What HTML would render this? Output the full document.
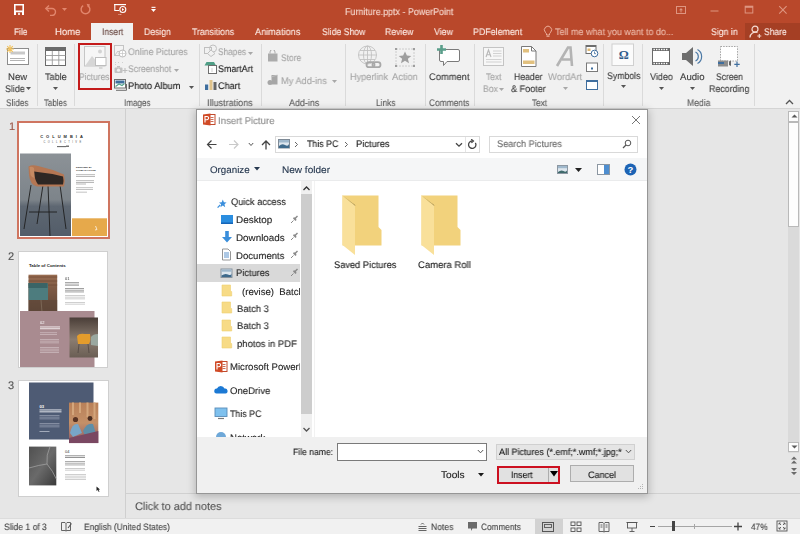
<!DOCTYPE html>
<html><head><meta charset="utf-8"><style>
html,body{margin:0;padding:0;}
body{width:800px;height:534px;position:relative;overflow:hidden;background:#E6E6E6;font-family:"Liberation Sans", sans-serif;}
.t{position:absolute;white-space:nowrap;-webkit-text-stroke:0.12px currentColor;text-rendering:geometricPrecision;will-change:transform;}
</style></head><body>
<div style="position:absolute;left:0px;top:0px;width:800px;height:40px;background:#B9482B"></div>
<div style="position:absolute;left:91px;top:23px;width:42px;height:17px;background:#F1F1F1"></div>
<div style="position:absolute;left:745px;top:23px;width:55px;height:17px;background:#A53F24"></div>
<div class="t" style="left:344.95px;top:8.00px;font-size:9.8px;line-height:9.8px;color:#F6D9CF;transform:scaleX(0.9088);transform-origin:0 0;">Furniture.pptx - PowerPoint</div>
<div class="t" style="left:13.96px;top:28.00px;font-size:9.6px;line-height:9.6px;color:#FBE9E3;transform:scaleX(0.8727);transform-origin:0 0;">File</div>
<div class="t" style="left:55.11px;top:28.00px;font-size:9.6px;line-height:9.6px;color:#FBE9E3;transform:scaleX(0.9880);transform-origin:0 0;">Home</div>
<div class="t" style="left:101.76px;top:28.00px;font-size:9.6px;line-height:9.6px;color:#6B4A44;transform:scaleX(0.8872);transform-origin:0 0;">Insert</div>
<div class="t" style="left:144.05px;top:28.00px;font-size:9.6px;line-height:9.6px;color:#FBE9E3;transform:scaleX(0.9002);transform-origin:0 0;">Design</div>
<div class="t" style="left:192.05px;top:28.00px;font-size:9.6px;line-height:9.6px;color:#FBE9E3;transform:scaleX(0.9046);transform-origin:0 0;">Transitions</div>
<div class="t" style="left:255.02px;top:28.00px;font-size:9.6px;line-height:9.6px;color:#FBE9E3;transform:scaleX(0.9560);transform-origin:0 0;">Animations</div>
<div class="t" style="left:321.55px;top:28.00px;font-size:9.6px;line-height:9.6px;color:#FBE9E3;transform:scaleX(0.9036);transform-origin:0 0;">Slide Show</div>
<div class="t" style="left:385.05px;top:28.00px;font-size:9.6px;line-height:9.6px;color:#FBE9E3;transform:scaleX(0.9023);transform-origin:0 0;">Review</div>
<div class="t" style="left:434.04px;top:28.00px;font-size:9.6px;line-height:9.6px;color:#FBE9E3;transform:scaleX(0.9159);transform-origin:0 0;">View</div>
<div class="t" style="left:473.29px;top:28.00px;font-size:9.6px;line-height:9.6px;color:#FBE9E3;transform:scaleX(0.9212);transform-origin:0 0;">PDFelement</div>
<div class="t" style="left:555.23px;top:28.00px;font-size:9.6px;line-height:9.6px;color:#EBB9A9;transform:scaleX(0.9370);transform-origin:0 0;">Tell me what you want to do...</div>
<div class="t" style="left:711.34px;top:28.00px;font-size:9.6px;line-height:9.6px;color:#FBE9E3;transform:scaleX(0.9130);transform-origin:0 0;">Sign in</div>
<div class="t" style="left:763.56px;top:28.00px;font-size:9.6px;line-height:9.6px;color:#FBE9E3;transform:scaleX(0.8842);transform-origin:0 0;">Share</div>
<div style="position:absolute;left:0px;top:40px;width:800px;height:68px;background:#F1F1F1"></div>
<div style="position:absolute;left:0px;top:108px;width:800px;height:1px;background:#D4D4D4"></div>
<div style="position:absolute;left:37px;top:44px;width:1px;height:62px;background:#DADADA"></div>
<div style="position:absolute;left:74px;top:44px;width:1px;height:62px;background:#DADADA"></div>
<div style="position:absolute;left:199px;top:44px;width:1px;height:62px;background:#DADADA"></div>
<div style="position:absolute;left:261px;top:44px;width:1px;height:62px;background:#DADADA"></div>
<div style="position:absolute;left:345px;top:44px;width:1px;height:62px;background:#DADADA"></div>
<div style="position:absolute;left:425px;top:44px;width:1px;height:62px;background:#DADADA"></div>
<div style="position:absolute;left:474px;top:44px;width:1px;height:62px;background:#DADADA"></div>
<div style="position:absolute;left:603px;top:44px;width:1px;height:62px;background:#DADADA"></div>
<div style="position:absolute;left:642px;top:44px;width:1px;height:62px;background:#DADADA"></div>
<div style="position:absolute;left:754px;top:44px;width:1px;height:62px;background:#DADADA"></div>
<div class="t" style="left:6.37px;top:99.00px;font-size:9.6px;line-height:9.6px;color:#5E5E5E;transform:scaleX(0.8605);transform-origin:0 0;">Slides</div>
<div class="t" style="left:43.59px;top:99.00px;font-size:9.6px;line-height:9.6px;color:#5E5E5E;transform:scaleX(0.8252);transform-origin:0 0;">Tables</div>
<div class="t" style="left:123.58px;top:99.00px;font-size:9.6px;line-height:9.6px;color:#5E5E5E;transform:scaleX(0.8418);transform-origin:0 0;">Images</div>
<div class="t" style="left:207.13px;top:99.00px;font-size:9.6px;line-height:9.6px;color:#5E5E5E;transform:scaleX(0.9412);transform-origin:0 0;">Illustrations</div>
<div class="t" style="left:288.53px;top:99.00px;font-size:9.6px;line-height:9.6px;color:#5E5E5E;transform:scaleX(0.9309);transform-origin:0 0;">Add-ins</div>
<div class="t" style="left:375.56px;top:99.00px;font-size:9.6px;line-height:9.6px;color:#5E5E5E;transform:scaleX(0.8746);transform-origin:0 0;">Links</div>
<div class="t" style="left:428.96px;top:99.00px;font-size:9.6px;line-height:9.6px;color:#5E5E5E;transform:scaleX(0.8726);transform-origin:0 0;">Comments</div>
<div class="t" style="left:531.58px;top:99.00px;font-size:9.6px;line-height:9.6px;color:#5E5E5E;transform:scaleX(0.8463);transform-origin:0 0;">Text</div>
<div class="t" style="left:686.55px;top:99.00px;font-size:9.6px;line-height:9.6px;color:#5E5E5E;transform:scaleX(0.8988);transform-origin:0 0;">Media</div>
<div class="t" style="left:8.30px;top:73.00px;font-size:9.6px;line-height:9.6px;color:#3C3C3C;transform:scaleX(0.9945);transform-origin:0 0;">New</div>
<div class="t" style="left:4.94px;top:85.00px;font-size:9.6px;line-height:9.6px;color:#3C3C3C;transform:scaleX(0.9229);transform-origin:0 0;">Slide</div>
<div class="t" style="left:44.73px;top:73.00px;font-size:9.6px;line-height:9.6px;color:#3C3C3C;transform:scaleX(0.9455);transform-origin:0 0;">Table</div>
<div class="t" style="left:79.16px;top:73.00px;font-size:9.6px;line-height:9.6px;color:#A6A6A6;transform:scaleX(0.8795);transform-origin:0 0;">Pictures</div>
<div class="t" style="left:128.14px;top:48.00px;font-size:9.6px;line-height:9.6px;color:#A6A6A6;transform:scaleX(0.9156);transform-origin:0 0;">Online Pictures</div>
<div class="t" style="left:128.15px;top:65.00px;font-size:9.6px;line-height:9.6px;color:#A6A6A6;transform:scaleX(0.8916);transform-origin:0 0;">Screenshot</div>
<div class="t" style="left:128.12px;top:82.00px;font-size:9.6px;line-height:9.6px;color:#222;transform:scaleX(0.9624);transform-origin:0 0;">Photo Album</div>
<div class="t" style="left:218.17px;top:48.00px;font-size:9.6px;line-height:9.6px;color:#A6A6A6;transform:scaleX(0.8615);transform-origin:0 0;">Shapes</div>
<div class="t" style="left:218.14px;top:65.00px;font-size:9.6px;line-height:9.6px;color:#222;transform:scaleX(0.9255);transform-origin:0 0;">SmartArt</div>
<div class="t" style="left:218.13px;top:82.00px;font-size:9.6px;line-height:9.6px;color:#222;transform:scaleX(0.9499);transform-origin:0 0;">Chart</div>
<div class="t" style="left:281.16px;top:54.00px;font-size:9.6px;line-height:9.6px;color:#A6A6A6;transform:scaleX(0.8804);transform-origin:0 0;">Store</div>
<div class="t" style="left:281.12px;top:77.00px;font-size:9.6px;line-height:9.6px;color:#A6A6A6;transform:scaleX(0.9643);transform-origin:0 0;">My Add-ins</div>
<div class="t" style="left:350.12px;top:73.00px;font-size:9.6px;line-height:9.6px;color:#A6A6A6;transform:scaleX(0.9510);transform-origin:0 0;">Hyperlink</div>
<div class="t" style="left:392.32px;top:73.00px;font-size:9.6px;line-height:9.6px;color:#A6A6A6;transform:scaleX(0.9688);transform-origin:0 0;">Action</div>
<div class="t" style="left:428.91px;top:73.00px;font-size:9.6px;line-height:9.6px;color:#3C3C3C;transform:scaleX(0.9733);transform-origin:0 0;">Comment</div>
<div class="t" style="left:485.57px;top:73.00px;font-size:9.6px;line-height:9.6px;color:#A6A6A6;transform:scaleX(0.8690);transform-origin:0 0;">Text</div>
<div class="t" style="left:483.05px;top:85.00px;font-size:9.6px;line-height:9.6px;color:#A6A6A6;transform:scaleX(0.9007);transform-origin:0 0;">Box</div>
<div class="t" style="left:514.15px;top:73.00px;font-size:9.6px;line-height:9.6px;color:#3C3C3C;transform:scaleX(0.9052);transform-origin:0 0;">Header</div>
<div class="t" style="left:510.53px;top:85.00px;font-size:9.6px;line-height:9.6px;color:#3C3C3C;transform:scaleX(0.9480);transform-origin:0 0;">&amp; Footer</div>
<div class="t" style="left:548.26px;top:73.00px;font-size:9.6px;line-height:9.6px;color:#A6A6A6;transform:scaleX(0.9749);transform-origin:0 0;">WordArt</div>
<div class="t" style="left:606.54px;top:72.00px;font-size:9.6px;line-height:9.6px;color:#3C3C3C;transform:scaleX(0.9101);transform-origin:0 0;">Symbols</div>
<div class="t" style="left:649.53px;top:73.00px;font-size:9.6px;line-height:9.6px;color:#3C3C3C;transform:scaleX(0.9393);transform-origin:0 0;">Video</div>
<div class="t" style="left:679.90px;top:73.00px;font-size:9.6px;line-height:9.6px;color:#3C3C3C;transform:scaleX(0.9978);transform-origin:0 0;">Audio</div>
<div class="t" style="left:715.96px;top:73.00px;font-size:9.6px;line-height:9.6px;color:#3C3C3C;transform:scaleX(0.8844);transform-origin:0 0;">Screen</div>
<div class="t" style="left:709.14px;top:85.00px;font-size:9.6px;line-height:9.6px;color:#3C3C3C;transform:scaleX(0.9210);transform-origin:0 0;">Recording</div>
<div style="position:absolute;left:77.5px;top:42.5px;width:34.5px;height:47.5px;border:2px solid #C41A1A;box-sizing:border-box"></div>
<div style="position:absolute;left:0px;top:109px;width:800px;height:409px;background:#E6E6E6"></div>
<div style="position:absolute;left:125px;top:109px;width:1px;height:409px;background:#CFCFCF"></div>
<div style="position:absolute;left:126px;top:493px;width:674px;height:1px;background:#D0D0D0"></div>
<div class="t" style="left:134.71px;top:502.00px;font-size:11.2px;line-height:11.2px;color:#555;transform:scaleX(0.9739);transform-origin:0 0;">Click to add notes</div>
<div style="position:absolute;left:0px;top:518px;width:800px;height:16px;background:#F1F1F1"></div>
<div style="position:absolute;left:0px;top:518px;width:800px;height:1px;background:#DCDCDC"></div>
<div class="t" style="left:3.73px;top:523.00px;font-size:9.2px;line-height:9.2px;color:#444;transform:scaleX(0.9320);transform-origin:0 0;">Slide 1 of 3</div>
<div class="t" style="left:84.24px;top:523.00px;font-size:9.2px;line-height:9.2px;color:#444;transform:scaleX(0.9135);transform-origin:0 0;">English (United States)</div>
<div class="t" style="left:430.53px;top:523.00px;font-size:9.2px;line-height:9.2px;color:#444;transform:scaleX(0.9320);transform-origin:0 0;">Notes</div>
<div class="t" style="left:480.55px;top:523.00px;font-size:9.2px;line-height:9.2px;color:#444;transform:scaleX(0.8971);transform-origin:0 0;">Comments</div>
<div style="position:absolute;left:535px;top:519px;width:28px;height:15px;background:#D2D2D2"></div>
<div class="t" style="left:750.55px;top:523.00px;font-size:9.2px;line-height:9.2px;color:#444;transform:scaleX(0.9042);transform-origin:0 0;">47%</div>
<div style="position:absolute;left:788px;top:110.5px;width:11px;height:342px;background:#DADADA"></div>
<div style="position:absolute;left:788px;top:110.5px;width:11px;height:11.5px;background:#FDFDFD;border:1px solid #B9B9B9;box-sizing:border-box"></div>
<svg style="position:absolute;left:790px;top:112px;" width="9" height="8" viewBox="0 0 9 8"><path d="M1.5 5.5 L4.5 2.5 L7.5 5.5Z" fill="#5A5A5A"/></svg>
<div style="position:absolute;left:788px;top:122px;width:11px;height:105px;background:#FDFDFD;border:1px solid #B9B9B9;box-sizing:border-box"></div>
<div style="position:absolute;left:788px;top:442px;width:11px;height:10px;background:#FDFDFD;border:1px solid #B9B9B9;box-sizing:border-box"></div>
<svg style="position:absolute;left:790px;top:443px;" width="9" height="8" viewBox="0 0 9 8"><path d="M1.5 2.5 L4.5 5.5 L7.5 2.5Z" fill="#5A5A5A"/></svg>
<svg style="position:absolute;left:789px;top:455px;" width="10" height="9" viewBox="0 0 10 9"><path d="M2 4.5 L5 1.5 L8 4.5Z M2 8.5 L5 5.5 L8 8.5Z" fill="#6A6A6A"/></svg>
<svg style="position:absolute;left:789px;top:467px;" width="10" height="9" viewBox="0 0 10 9"><path d="M2 1 L5 4 L8 1Z M2 5 L5 8 L8 5Z" fill="#6A6A6A"/></svg>
<svg style="position:absolute;left:60px;top:521px;" width="13" height="11" viewBox="0 0 13 11"><path d="M1.5 1.5 H5 L6 2.5 L7 1.5 H10.5 V9.5 H7 L6 10 L5 9.5 H1.5Z M6 2.5 V10" fill="none" stroke="#555" stroke-width="0.9"/><path d="M8 7 L11.5 2.5" stroke="#555" stroke-width="1.1"/></svg>
<svg style="position:absolute;left:418px;top:522px;" width="9" height="9" viewBox="0 0 9 9"><path d="M3 2.5 L4.5 1 L6 2.5" fill="none" stroke="#555" stroke-width="0.9"/><path d="M0.5 4.5 H8.5 M0.5 6.5 H8.5 M0.5 8.5 H8.5" stroke="#555" stroke-width="0.9"/></svg>
<svg style="position:absolute;left:467px;top:521px;" width="11" height="11" viewBox="0 0 11 11"><path d="M1 1 H10 V7.5 H5.5 L4 10 V7.5 H1Z" fill="#6A6A6A"/></svg>
<svg style="position:absolute;left:541px;top:521px;" width="14" height="12" viewBox="0 0 14 12"><rect x="1.5" y="1.5" width="11" height="9" fill="none" stroke="#555" stroke-width="1"/><rect x="3.5" y="3.5" width="7" height="3" fill="none" stroke="#555" stroke-width="0.9"/></svg>
<svg style="position:absolute;left:570px;top:521px;" width="12" height="12" viewBox="0 0 12 12"><g fill="none" stroke="#555" stroke-width="0.9"><rect x="1" y="1" width="4" height="3.5"/><rect x="7" y="1" width="4" height="3.5"/><rect x="1" y="7" width="4" height="3.5"/><rect x="7" y="7" width="4" height="3.5"/></g></svg>
<svg style="position:absolute;left:598px;top:521px;" width="12" height="12" viewBox="0 0 12 12"><path d="M1 1.5 H5 L6 2.5 L7 1.5 H11 V10.5 H7 L6 11 L5 10.5 H1Z M6 2.5 V11 M2.5 4H4.5 M2.5 6H4.5 M7.5 4H9.5 M7.5 6H9.5" fill="none" stroke="#555" stroke-width="0.9"/></svg>
<svg style="position:absolute;left:626px;top:521px;" width="12" height="12" viewBox="0 0 12 12"><path d="M0.5 1.5 H11.5" stroke="#555" stroke-width="1"/><rect x="1.5" y="1.5" width="9" height="5.5" fill="none" stroke="#555" stroke-width="0.9"/><path d="M6 7 V10.5 M3.5 10.5 H8.5" stroke="#555" stroke-width="0.9"/></svg>
<div style="position:absolute;left:650px;top:526px;width:5px;height:1px;background:#444"></div>
<div style="position:absolute;left:658px;top:526px;width:74px;height:1px;background:#A6A6A6"></div>
<div style="position:absolute;left:694px;top:524px;width:1px;height:5px;background:#A6A6A6"></div>
<div style="position:absolute;left:672px;top:521px;width:3px;height:10px;background:#444"></div>
<svg style="position:absolute;left:733.5px;top:521.5px;" width="8" height="9" viewBox="0 0 8 9"><path d="M4 0.5 V8.5 M0 4.5 H8" stroke="#444" stroke-width="1.3"/></svg>
<svg style="position:absolute;left:776px;top:520px;" width="12" height="12" viewBox="0 0 12 12"><rect x="1" y="1" width="10" height="10" fill="none" stroke="#555" stroke-width="0.9"/><path d="M3 3 L5 5 M9 3 L7 5 M3 9 L5 7 M9 9 L7 7" stroke="#555" stroke-width="0.9"/><path d="M3 3H4.6 M3 3V4.6 M9 3H7.4 M9 3V4.6 M3 9H4.6 M3 9V7.4 M9 9H7.4 M9 9V7.4" stroke="#555" stroke-width="0.9"/></svg>
<div class="t" style="left:8.80px;top:122.00px;font-size:11px;line-height:11px;color:#9A5444;">1</div>
<div class="t" style="left:8.20px;top:252.00px;font-size:11px;line-height:11px;color:#555;">2</div>
<div class="t" style="left:8.20px;top:381.00px;font-size:11px;line-height:11px;color:#555;">3</div>
<div style="position:absolute;left:17px;top:121px;width:93px;height:118px;border:2px solid #CF7560;box-sizing:border-box;background:#fff"></div>
<svg style="position:absolute;left:19px;top:123px;" width="88" height="114" viewBox="0 0 88 114"><rect x="0" y="0" width="88" height="114" fill="#fff"/><text x="44" y="14.8" text-anchor="middle" font-family="Liberation Sans" font-size="4" font-weight="bold" letter-spacing="3" fill="#2A2A2A">COLUMBIA</text><text x="44.5" y="20.3" text-anchor="middle" font-family="Liberation Sans" font-size="2.6" letter-spacing="2.4" fill="#555">COLLECTIVE</text><rect x="38" y="23.3" width="9" height="0.8" fill="#333"/><rect x="47" y="22.6" width="3" height="1.2" fill="#555"/><defs><linearGradient id="g1" x1="0" y1="0" x2="0" y2="1"><stop offset="0" stop-color="#8C9297"/><stop offset="0.56" stop-color="#7D848A"/><stop offset="0.64" stop-color="#5E6772"/><stop offset="1" stop-color="#535D69"/></linearGradient></defs><rect x="1" y="30.5" width="51" height="82.5" fill="url(#g1)"/><g stroke="#1E1E1E" stroke-width="0.9" fill="none"><path d="M12 62 L5 106 M24 62 L18 101 M29 62 L31 113 M41 62 L47 106 M10 89 L38 89"/></g><path d="M9.5 43.5 Q13 41.5 19 43 Q33 46 45 51.5 Q46.5 58 45 63.5 L18 63.5 Q11 62 10 52Z" fill="#B47653"/><path d="M15 48.5 Q30 50 44 53.5 Q45 58 44 61.5 L19 61.5 Q15.5 57 15 48.5Z" fill="#2E2724"/><path d="M10.5 44 Q13 43 15 45 L15.5 55 Q13 55 11.5 52Z" fill="#C58A63"/><text x="57" y="44.6" font-family="Liberation Sans" font-size="2.3" font-weight="bold" fill="#1A1A1A">DESIGNED BY</text><text x="57" y="48" font-family="Liberation Sans" font-size="2.3" font-weight="bold" fill="#1A1A1A">THOMAS LYKTUN</text><rect x="57" y="51.50" width="19" height="0.6" fill="#8A8A8A"/><rect x="57" y="53.10" width="19" height="0.6" fill="#8A8A8A"/><rect x="57" y="57.50" width="18" height="0.6" fill="#8A8A8A"/><rect x="57" y="59.10" width="18" height="0.6" fill="#8A8A8A"/><rect x="57" y="60.70" width="10" height="0.6" fill="#8A8A8A"/><rect x="57" y="64.50" width="17" height="0.6" fill="#999"/><rect x="57" y="66.10" width="17" height="0.6" fill="#999"/><rect x="57" y="68.8" width="11" height="0.6" fill="#999"/><rect x="53" y="95.3" width="35" height="17.7" fill="#E6A94B"/><path d="M76.5 103 L78 106.5 L76 107" stroke="#fff" stroke-width="0.7" fill="none"/></svg>
<div style="position:absolute;left:18px;top:250.5px;width:90px;height:117px;border:1px solid #CFCFCF;box-sizing:border-box;background:#fff"></div>
<svg style="position:absolute;left:19px;top:251.5px;" width="88" height="115" viewBox="0 0 88 115"><rect x="0" y="0" width="88" height="115" fill="#fff"/><text x="10" y="14.6" font-family="Liberation Sans" font-size="4.4" font-weight="bold" fill="#222">Table of Contents</text><defs><linearGradient id="g2" x1="0" y1="0" x2="0" y2="1"><stop offset="0" stop-color="#9A6E52"/><stop offset="0.35" stop-color="#7E5A45"/><stop offset="1" stop-color="#5E4535"/></linearGradient><linearGradient id="g3" x1="0" y1="0" x2="0" y2="1"><stop offset="0" stop-color="#4A3E38"/><stop offset="0.55" stop-color="#8A7C70"/><stop offset="1" stop-color="#6A5E54"/></linearGradient></defs><rect x="9.5" y="22.7" width="28.7" height="38" fill="url(#g2)"/><path d="M9.5 25 H38.2 M9.5 29 H38.2 M9.5 33 H38.2" stroke="#6E4A36" stroke-width="0.8"/><path d="M9.5 31 H27 Q29 31 29 33 V48 H9.5Z" fill="#4D7C7E"/><rect x="9.5" y="31" width="19" height="5" fill="#3A6466"/><path d="M22 48 L23 60" stroke="#B8A890" stroke-width="0.8"/><rect x="9.5" y="48" width="28.7" height="12.7" fill="#5E483A" opacity="0.6"/><text x="46" y="28" font-family="Liberation Sans" font-size="4" fill="#333">01</text><rect x="46" y="30.50" width="14" height="0.7" fill="#555"/><rect x="46" y="32.70" width="14" height="0.7" fill="#555"/><rect x="46" y="36.00" width="19" height="0.7" fill="#777"/><rect x="46" y="37.80" width="19" height="0.7" fill="#777"/><rect x="46" y="39.60" width="19" height="0.7" fill="#777"/><rect x="46" y="43.00" width="20" height="0.6" fill="#B0B0B0"/><rect x="46" y="44.80" width="20" height="0.6" fill="#B0B0B0"/><rect x="46" y="46.60" width="20" height="0.6" fill="#B0B0B0"/><rect x="46" y="50.00" width="20" height="0.6" fill="#B0B0B0"/><rect x="46" y="51.80" width="20" height="0.6" fill="#B0B0B0"/><rect x="1" y="59" width="74.5" height="56" fill="#A98B90"/><rect x="50.5" y="65.5" width="28.5" height="40" fill="url(#g3)"/><path d="M58 84 Q60 81 66 82 L71 82 Q72 89 70 92 L59 92Z" fill="#E39C2C"/><path d="M60 92 L59 101 M69 92 L70 101" stroke="#3A3030" stroke-width="0.5"/><path d="M72 85 Q74 82 79 82 V94 L72 93Z" fill="#9AA8A0"/><text x="21" y="72" font-family="Liberation Sans" font-size="4" fill="#fff">02</text><rect x="21" y="74.50" width="20" height="0.9" fill="#F6F0F1"/><rect x="21" y="76.30" width="20" height="0.9" fill="#F6F0F1"/><rect x="21" y="80.50" width="17" height="0.6" fill="#D8C8CB"/><rect x="21" y="82.30" width="17" height="0.6" fill="#D8C8CB"/><rect x="21" y="87.00" width="19" height="0.6" fill="#D8C8CB"/><rect x="21" y="88.80" width="19" height="0.6" fill="#D8C8CB"/><rect x="21" y="90.60" width="19" height="0.6" fill="#D8C8CB"/><rect x="21" y="95.00" width="19" height="0.6" fill="#D8C8CB"/><rect x="21" y="96.80" width="19" height="0.6" fill="#D8C8CB"/><rect x="21" y="98.60" width="19" height="0.6" fill="#D8C8CB"/><rect x="21" y="100.40" width="19" height="0.6" fill="#D8C8CB"/></svg>
<div style="position:absolute;left:18px;top:379.5px;width:91px;height:117px;border:1px solid #CFCFCF;box-sizing:border-box;background:#fff"></div>
<svg style="position:absolute;left:19px;top:380.5px;" width="89" height="115" viewBox="0 0 89 115"><rect x="0" y="0" width="89" height="115" fill="#fff"/><rect x="10" y="1.5" width="64.5" height="57" fill="#4E5B74"/><text x="20.5" y="26.5" font-family="Liberation Sans" font-size="4.2" font-weight="bold" fill="#fff">03</text><rect x="20.5" y="28.50" width="22" height="0.9" fill="#F0F2F6"/><rect x="20.5" y="30.40" width="22" height="0.9" fill="#F0F2F6"/><rect x="20.5" y="34.00" width="20" height="0.6" fill="#A8B0C0"/><rect x="20.5" y="35.80" width="20" height="0.6" fill="#A8B0C0"/><rect x="20.5" y="37.60" width="20" height="0.6" fill="#A8B0C0"/><rect x="20.5" y="42.00" width="20" height="0.6" fill="#A8B0C0"/><rect x="20.5" y="43.80" width="20" height="0.6" fill="#A8B0C0"/><rect x="20.5" y="45.60" width="20" height="0.6" fill="#A8B0C0"/><rect x="20.5" y="50" width="10" height="0.7" fill="#C8CDD8"/><defs><linearGradient id="g4" x1="0" y1="0" x2="0" y2="1"><stop offset="0" stop-color="#B98058"/><stop offset="0.5" stop-color="#C49068"/><stop offset="1" stop-color="#8A5A6A"/></linearGradient><linearGradient id="g5" x1="0" y1="0" x2="1" y2="1"><stop offset="0" stop-color="#505050"/><stop offset="0.5" stop-color="#6A6A6A"/><stop offset="1" stop-color="#3A3A3A"/></linearGradient></defs><rect x="50" y="21.6" width="29.3" height="40.5" fill="url(#g4)"/><path d="M54 21.6 V34 M61 21.6 V32 M68.5 21.6 V36 M75.5 21.6 V38" stroke="#D4A67C" stroke-width="2"/><path d="M51 52 Q53 42 59 43 L63 52 L54 56Z" fill="#78A6C8"/><circle cx="56.5" cy="38.5" r="2.6" fill="#5A3424"/><path d="M64 50 Q68 41 74 43 L77 53 L66 55Z" fill="#5E8EA8"/><circle cx="71" cy="37.5" r="2.4" fill="#4A2E22"/><path d="M50 57 L79.3 50 V62.1 H50Z" fill="#7A4862"/><rect x="10" y="65.6" width="27.3" height="38.8" fill="url(#g5)"/><path d="M10 87 Q20 84 28 83 Q34 90 37.3 98 M28 83 Q27 74 31 65.6" stroke="#A8A8A8" stroke-width="0.7" fill="none"/><text x="46" y="72" font-family="Liberation Sans" font-size="4" fill="#333">04</text><rect x="46" y="74.50" width="20" height="0.7" fill="#666"/><rect x="46" y="76.30" width="20" height="0.7" fill="#666"/><rect x="46" y="80.00" width="20" height="0.7" fill="#888"/><rect x="46" y="81.80" width="20" height="0.7" fill="#888"/><rect x="46" y="83.60" width="20" height="0.7" fill="#888"/><rect x="46" y="87.00" width="20" height="0.6" fill="#AAA"/><rect x="46" y="88.80" width="20" height="0.6" fill="#AAA"/><rect x="46" y="93.00" width="21" height="0.6" fill="#B0B0B0"/><rect x="46" y="94.80" width="21" height="0.6" fill="#B0B0B0"/><rect x="46" y="96.60" width="21" height="0.6" fill="#B0B0B0"/><rect x="46" y="98.40" width="21" height="0.6" fill="#B0B0B0"/><path d="M77.5 105.5 V110 L78.7 109 L79.8 111 L80.5 110.6 L79.5 108.7 L81 108.5Z" fill="#222"/></svg>
<div style="position:absolute;left:196px;top:109px;width:452px;height:385px;background:#FFFFFF;border:1px solid #969696;box-sizing:border-box;box-shadow:0 2px 8px 1px rgba(0,0,0,0.22)"></div>
<svg style="position:absolute;left:202px;top:113px;" width="14" height="14" viewBox="0 0 14 14"><rect x="6" y="1.5" width="7" height="10" fill="#fff" stroke="#C24A2C" stroke-width="1"/><path d="M8.5 4.5H11.5 M8.5 6.5H11.5 M8.5 8.5H11.5" stroke="#C24A2C" stroke-width="0.8"/><path d="M1 1.5 L8.5 0.5 V12.5 L1 11.5Z" fill="#D04A26"/><path d="M3 9.5 V3.5 H5 A1.6 1.6 0 0 1 5 6.7 H3" fill="none" stroke="#fff" stroke-width="1.1"/></svg>
<div class="t" style="left:218.11px;top:117.00px;font-size:9.8px;line-height:9.8px;color:#8E8E8E;transform:scaleX(0.9795);transform-origin:0 0;">Insert Picture</div>
<svg style="position:absolute;left:631px;top:115px;" width="10" height="10" viewBox="0 0 10 10"><path d="M1 1 L9 9 M9 1 L1 9" stroke="#666" stroke-width="0.9"/></svg>
<svg style="position:absolute;left:206px;top:139px;" width="12" height="11" viewBox="0 0 12 11"><path d="M10.5 5.5 H1.5 M5.5 1.5 L1.5 5.5 L5.5 9.5" fill="none" stroke="#444" stroke-width="1.2"/></svg>
<svg style="position:absolute;left:228px;top:139px;" width="12" height="11" viewBox="0 0 12 11"><path d="M1 5.5 H10 M6 1.5 L10 5.5 L6 9.5" fill="none" stroke="#C9C9C9" stroke-width="1.2"/></svg>
<svg style="position:absolute;left:248px;top:142px;" width="6" height="5" viewBox="0 0 6 5"><path d="M0.8 1 L3 3.5 L5.2 1" fill="none" stroke="#555" stroke-width="1"/></svg>
<svg style="position:absolute;left:261px;top:140px;" width="10" height="10" viewBox="0 0 10 10"><path d="M5 9.5 V1.2 M1 5 L5 1 L9 5" fill="none" stroke="#444" stroke-width="1.3"/></svg>
<div style="position:absolute;left:275px;top:136px;width:205px;height:17px;background:#fff;border:1px solid #D9D9D9;box-sizing:border-box"></div>
<svg style="position:absolute;left:277px;top:138px;" width="14" height="11" viewBox="0 0 14 11"><rect x="1.5" y="1.5" width="11" height="8.5" fill="#DDE6EE" stroke="#7E8A96" stroke-width="1"/><path d="M2 8 Q5 5 8 7 T12 6 V10 H2Z" fill="#3E6A8C"/><rect x="2" y="2" width="10" height="2.5" fill="#9FB8CC"/></svg>
<svg style="position:absolute;left:294px;top:141px;" width="5" height="7" viewBox="0 0 5 7"><path d="M1 1 L3.5 3.5 L1 6" fill="none" stroke="#555" stroke-width="0.9"/></svg>
<div class="t" style="left:306.54px;top:140.00px;font-size:9.6px;line-height:9.6px;color:#222;transform:scaleX(0.9198);transform-origin:0 0;">This PC</div>
<svg style="position:absolute;left:344px;top:141px;" width="5" height="7" viewBox="0 0 5 7"><path d="M1 1 L3.5 3.5 L1 6" fill="none" stroke="#555" stroke-width="0.9"/></svg>
<div class="t" style="left:355.71px;top:140.00px;font-size:9.6px;line-height:9.6px;color:#222;transform:scaleX(0.9718);transform-origin:0 0;">Pictures</div>
<div style="position:absolute;left:465px;top:137px;width:1px;height:15px;background:#E5E5E5"></div>
<svg style="position:absolute;left:454.5px;top:142px;" width="8" height="6" viewBox="0 0 8 6"><path d="M1 1.2 L4 4.2 L7 1.2" fill="none" stroke="#444" stroke-width="1.3"/></svg>
<svg style="position:absolute;left:467px;top:139px;" width="11" height="11" viewBox="0 0 11 11"><path d="M8.4 3.8 A3.7 3.7 0 1 1 5.2 2" fill="none" stroke="#444" stroke-width="1.3"/><path d="M4.2 0.2 L6.5 2 L4.4 3.9" fill="none" stroke="#444" stroke-width="1.2"/></svg>
<div style="position:absolute;left:489px;top:136px;width:149px;height:17px;background:#fff;border:1px solid #D9D9D9;box-sizing:border-box"></div>
<div class="t" style="left:496.52px;top:140.00px;font-size:9.6px;line-height:9.6px;color:#6D6D6D;transform:scaleX(0.9578);transform-origin:0 0;">Search Pictures</div>
<svg style="position:absolute;left:622px;top:139px;" width="10" height="10" viewBox="0 0 10 10"><circle cx="6" cy="4" r="2.8" fill="none" stroke="#555" stroke-width="1"/><path d="M4 6 L1 9" stroke="#555" stroke-width="1.2"/></svg>
<div style="position:absolute;left:197px;top:158px;width:450px;height:23px;background:#F5F6F7"></div>
<div style="position:absolute;left:197px;top:180px;width:450px;height:1px;background:#EAEBEC"></div>
<div class="t" style="left:209.99px;top:166.00px;font-size:9.6px;line-height:9.6px;color:#26384F;transform:scaleX(1.0179);transform-origin:0 0;">Organize</div>
<svg style="position:absolute;left:254px;top:167px;" width="6" height="4" viewBox="0 0 6 4"><path d="M0 0H6L3 3.5Z" fill="#26384F"/></svg>
<div class="t" style="left:282.18px;top:166.00px;font-size:9.6px;line-height:9.6px;color:#26384F;transform:scaleX(1.0461);transform-origin:0 0;">New folder</div>
<svg style="position:absolute;left:557px;top:164.5px;" width="11" height="10" viewBox="0 0 11 10"><rect x="0.5" y="0.5" width="10" height="8" fill="#DDE6EE" stroke="#8C97A2" stroke-width="1"/><rect x="1" y="1" width="9" height="2.2" fill="#9FB8CC"/><path d="M1 7 Q4 4.5 6.5 6 T10 5.5 V8 H1Z" fill="#3E6A6C"/></svg>
<svg style="position:absolute;left:575px;top:167.5px;" width="7" height="5" viewBox="0 0 7 5"><path d="M0 0H7L3.5 4Z" fill="#222"/></svg>
<svg style="position:absolute;left:597px;top:163.5px;" width="13" height="11" viewBox="0 0 13 11"><rect x="0.5" y="0.5" width="12" height="10" fill="#fff" stroke="#8C97A2" stroke-width="1"/><rect x="7" y="1" width="5" height="9" fill="#4E8ED0"/></svg>
<svg style="position:absolute;left:623.5px;top:163px;" width="13" height="13" viewBox="0 0 13 13"><circle cx="6.5" cy="6.5" r="6" fill="#1D64B5"/><text x="3.6" y="10.2" font-family="Liberation Sans" font-size="9.5" font-weight="bold" fill="#fff">?</text></svg>
<div style="position:absolute;left:0;top:0;width:300px;height:437px;overflow:hidden">
<div style="position:absolute;left:197px;top:264px;width:104px;height:18px;background:#D9D9D9"></div>
<svg style="position:absolute;left:216.5px;top:198.5px;" width="10" height="9" viewBox="0 0 10 9"><path d="M5.8 0.5 L6.9 3.3 L9.6 3.5 L7.5 5.3 L8.2 8.2 L5.8 6.6 L3.4 8.2 L4.1 5.3 L2 3.5 L4.7 3.3Z" fill="#3B8FDC"/><path d="M0.6 8.6 L3.2 6" stroke="#3B8FDC" stroke-width="1.2"/></svg>
<div class="t" style="left:230.52px;top:198.00px;font-size:9.6px;line-height:9.6px;color:#262626;transform:scaleX(0.9617);transform-origin:0 0;">Quick access</div>
<svg style="position:absolute;left:220px;top:214px;" width="14" height="11" viewBox="0 0 14 11"><rect x="1" y="1" width="12" height="9" fill="#2B8EE0"/><rect x="1" y="8.5" width="12" height="1.5" fill="#1565B8"/></svg>
<div class="t" style="left:235.98px;top:216.00px;font-size:9.6px;line-height:9.6px;color:#262626;transform:scaleX(1.0336);transform-origin:0 0;">Desktop</div>
<svg style="position:absolute;left:221px;top:230px;" width="12" height="14" viewBox="0 0 12 14"><path d="M4.2 1 H7.8 V7 H11 L6 12.5 L1 7 H4.2Z" fill="#3A8EDB"/></svg>
<div class="t" style="left:235.99px;top:234.00px;font-size:9.6px;line-height:9.6px;color:#262626;transform:scaleX(1.0254);transform-origin:0 0;">Downloads</div>
<svg style="position:absolute;left:221px;top:248px;" width="11" height="13" viewBox="0 0 11 13"><path d="M1.5 1 H7 L9.5 3.5 V12 H1.5Z" fill="#fff" stroke="#8A8A8A" stroke-width="0.9"/><path d="M3 5H8 M3 7H8 M3 9H8" stroke="#4A86C5" stroke-width="0.9"/></svg>
<div class="t" style="left:236.00px;top:252.00px;font-size:9.6px;line-height:9.6px;color:#262626;transform:scaleX(0.9968);transform-origin:0 0;">Documents</div>
<svg style="position:absolute;left:220px;top:268px;" width="13" height="11" viewBox="0 0 13 11"><rect x="1" y="1" width="11" height="8.5" fill="#DDE6EE" stroke="#7E8A96" stroke-width="0.9"/><path d="M1.5 7.5 Q5 5 8 6.5 T11.5 5.5 V9 H1.5Z" fill="#3E6A8C"/><rect x="1.5" y="1.5" width="10" height="2.2" fill="#9FB8CC"/></svg>
<div class="t" style="left:236.02px;top:269.00px;font-size:9.6px;line-height:9.6px;color:#262626;transform:scaleX(0.9689);transform-origin:0 0;">Pictures</div>
<svg style="position:absolute;left:290px;top:215px;" width="9" height="9" viewBox="0 0 9 9"><path d="M1 8 L3.5 5.5" stroke="#8A8A8A" stroke-width="1"/><path d="M3 3.5 L5.5 6 L6.5 5 L6 3.5 L8 1.5 L7 0.5 L5 2.5 L3.8 2.2Z" fill="#8A8A8A"/></svg>
<svg style="position:absolute;left:290px;top:232px;" width="9" height="9" viewBox="0 0 9 9"><path d="M1 8 L3.5 5.5" stroke="#8A8A8A" stroke-width="1"/><path d="M3 3.5 L5.5 6 L6.5 5 L6 3.5 L8 1.5 L7 0.5 L5 2.5 L3.8 2.2Z" fill="#8A8A8A"/></svg>
<svg style="position:absolute;left:290px;top:250px;" width="9" height="9" viewBox="0 0 9 9"><path d="M1 8 L3.5 5.5" stroke="#8A8A8A" stroke-width="1"/><path d="M3 3.5 L5.5 6 L6.5 5 L6 3.5 L8 1.5 L7 0.5 L5 2.5 L3.8 2.2Z" fill="#8A8A8A"/></svg>
<svg style="position:absolute;left:290px;top:268px;" width="9" height="9" viewBox="0 0 9 9"><path d="M1 8 L3.5 5.5" stroke="#8A8A8A" stroke-width="1"/><path d="M3 3.5 L5.5 6 L6.5 5 L6 3.5 L8 1.5 L7 0.5 L5 2.5 L3.8 2.2Z" fill="#8A8A8A"/></svg>
<svg style="position:absolute;left:221px;top:284px;" width="12" height="13" viewBox="0 0 12 13"><path d="M1 1 H9.5 V6.5 L10.7 7.7 V12 H1Z" fill="#F7DB86"/><path d="M1 1 H9.5 V6.5 L10.7 7.7 V12 H1Z" fill="none" stroke="#EFD070" stroke-width="0.6"/></svg>
<div class="t" style="left:241.70px;top:288.00px;font-size:9.6px;line-height:9.6px;color:#262626;">(revise)&nbsp; Batch</div>
<svg style="position:absolute;left:221px;top:301.3px;" width="12" height="13" viewBox="0 0 12 13"><path d="M1 1 H9.5 V6.5 L10.7 7.7 V12 H1Z" fill="#F7DB86"/><path d="M1 1 H9.5 V6.5 L10.7 7.7 V12 H1Z" fill="none" stroke="#EFD070" stroke-width="0.6"/></svg>
<div class="t" style="left:236.51px;top:305.00px;font-size:9.6px;line-height:9.6px;color:#262626;transform:scaleX(0.9768);transform-origin:0 0;">Batch 3</div>
<svg style="position:absolute;left:221px;top:318.8px;" width="12" height="13" viewBox="0 0 12 13"><path d="M1 1 H9.5 V6.5 L10.7 7.7 V12 H1Z" fill="#F7DB86"/><path d="M1 1 H9.5 V6.5 L10.7 7.7 V12 H1Z" fill="none" stroke="#EFD070" stroke-width="0.6"/></svg>
<div class="t" style="left:236.51px;top:322.00px;font-size:9.6px;line-height:9.6px;color:#262626;transform:scaleX(0.9768);transform-origin:0 0;">Batch 3</div>
<svg style="position:absolute;left:221px;top:336.2px;" width="12" height="13" viewBox="0 0 12 13"><path d="M1 1 H9.5 V6.5 L10.7 7.7 V12 H1Z" fill="#F7DB86"/><path d="M1 1 H9.5 V6.5 L10.7 7.7 V12 H1Z" fill="none" stroke="#EFD070" stroke-width="0.6"/></svg>
<div class="t" style="left:236.51px;top:340.00px;font-size:9.6px;line-height:9.6px;color:#262626;transform:scaleX(0.9847);transform-origin:0 0;">photos in PDF</div>
<svg style="position:absolute;left:214px;top:360px;" width="14" height="14" viewBox="0 0 14 14"><rect x="6" y="1.5" width="7" height="10" fill="#fff" stroke="#C24A2C" stroke-width="1"/><path d="M8.5 4.5H11.5 M8.5 6.5H11.5 M8.5 8.5H11.5" stroke="#C24A2C" stroke-width="0.8"/><path d="M1 1.5 L8.5 0.5 V12.5 L1 11.5Z" fill="#D04A26"/><path d="M3 9.5 V3.5 H5 A1.6 1.6 0 0 1 5 6.7 H3" fill="none" stroke="#fff" stroke-width="1.1"/></svg>
<div class="t" style="left:230.40px;top:363.00px;font-size:9.6px;line-height:9.6px;color:#262626;">Microsoft PowerPoint</div>
<svg style="position:absolute;left:214px;top:384px;" width="14" height="11" viewBox="0 0 14 11"><path d="M2.5 9.5 A2.5 2.5 0 0 1 3 4.5 A4 4 0 0 1 10.5 4.5 A2.5 2.5 0 0 1 11.5 9.5Z" fill="#1C79D4"/></svg>
<div class="t" style="left:229.90px;top:387.00px;font-size:9.6px;line-height:9.6px;color:#262626;transform:scaleX(0.9914);transform-origin:0 0;">OneDrive</div>
<svg style="position:absolute;left:214px;top:407px;" width="14" height="13" viewBox="0 0 14 13"><rect x="1" y="1" width="12" height="8.5" fill="#7FC1EE" stroke="#5A8DB8" stroke-width="0.9"/><path d="M4 11.5 H10" stroke="#7A7A7A" stroke-width="1.2"/></svg>
<div class="t" style="left:229.94px;top:410.00px;font-size:9.6px;line-height:9.6px;color:#262626;transform:scaleX(0.9227);transform-origin:0 0;">This PC</div>
<svg style="position:absolute;left:214px;top:430px;" width="14" height="10" viewBox="0 0 14 10"><circle cx="7" cy="7" r="5" fill="#6EA8D8"/></svg>
<div class="t" style="left:230.40px;top:434.00px;font-size:9.6px;line-height:9.6px;color:#262626;">Network</div>
</div>
<div style="position:absolute;left:301px;top:181px;width:11px;height:256px;background:#F0F0F0"></div>
<div style="position:absolute;left:301px;top:193.5px;width:11px;height:220px;background:#CDCDCD"></div>
<svg style="position:absolute;left:302px;top:185px;" width="9" height="7" viewBox="0 0 9 7"><path d="M1.5 5 L4.5 2 L7.5 5" fill="none" stroke="#333" stroke-width="1.3"/></svg>
<svg style="position:absolute;left:302px;top:426px;" width="9" height="7" viewBox="0 0 9 7"><path d="M1.5 2 L4.5 5 L7.5 2" fill="none" stroke="#555" stroke-width="1.3"/></svg>
<div style="position:absolute;left:314px;top:181px;width:1px;height:256px;background:#F2F2F2"></div>
<svg style="position:absolute;left:341.5px;top:194.5px;" width="41" height="61" viewBox="0 0 41 61"><path d="M0.5 0.5 H36.5 V32 L39.5 35 V50.5 H0.5Z" fill="#F2D27C"/><path d="M0.5 0.5 L13 10.5 V60 L0.5 50Z" fill="#F9E09A"/><path d="M0.5 0.5 L13 10.5 L13.5 10.5" stroke="#F3D27A" stroke-width="0.5"/></svg>
<svg style="position:absolute;left:421.3px;top:194.5px;" width="41" height="61" viewBox="0 0 41 61"><path d="M0.5 0.5 H36.5 V32 L39.5 35 V50.5 H0.5Z" fill="#F2D27C"/><path d="M0.5 0.5 L13 10.5 V60 L0.5 50Z" fill="#F9E09A"/><path d="M0.5 0.5 L13 10.5 L13.5 10.5" stroke="#F3D27A" stroke-width="0.5"/></svg>
<div class="t" style="left:333.52px;top:261.00px;font-size:9.6px;line-height:9.6px;color:#222;transform:scaleX(0.9665);transform-origin:0 0;">Saved Pictures</div>
<div class="t" style="left:418.11px;top:261.00px;font-size:9.6px;line-height:9.6px;color:#222;transform:scaleX(0.9897);transform-origin:0 0;">Camera Roll</div>
<div style="position:absolute;left:197px;top:437px;width:450px;height:56px;background:#F0F0F0"></div>
<div class="t" style="left:293.23px;top:448.00px;font-size:9.2px;line-height:9.2px;color:#1A1A1A;transform:scaleX(0.9360);transform-origin:0 0;">File name:</div>
<div style="position:absolute;left:337px;top:443.3px;width:150px;height:17.5px;background:#fff;border:1px solid #7A7A7A;box-sizing:border-box"></div>
<svg style="position:absolute;left:477px;top:449px;" width="7" height="5" viewBox="0 0 7 5"><path d="M0.8 1 L3.5 3.8 L6.2 1" fill="none" stroke="#555" stroke-width="1"/></svg>
<div style="position:absolute;left:496px;top:443.5px;width:138.5px;height:16px;background:#E5E5E5;border:1px solid #D0D0D0;box-sizing:border-box"></div>
<div class="t" style="left:498.51px;top:448.00px;font-size:9.2px;line-height:9.2px;color:#1A1A1A;transform:scaleX(0.9772);transform-origin:0 0;">All Pictures (*.emf;*.wmf;*.jpg;*</div>
<svg style="position:absolute;left:625px;top:449px;" width="7" height="5" viewBox="0 0 7 5"><path d="M0.8 1 L3.5 3.8 L6.2 1" fill="none" stroke="#555" stroke-width="1"/></svg>
<div class="t" style="left:441.18px;top:471.00px;font-size:9.8px;line-height:9.8px;color:#1A1A1A;transform:scaleX(1.0359);transform-origin:0 0;">Tools</div>
<svg style="position:absolute;left:477.5px;top:472.5px;" width="6" height="4" viewBox="0 0 6 4"><path d="M0 0H6L3 3.5Z" fill="#1A1A1A"/></svg>
<div style="position:absolute;left:497px;top:466px;width:63px;height:17.6px;background:#E1E1E1;border:2px solid #CC1020;box-sizing:border-box"></div>
<div style="position:absolute;left:548px;top:468px;width:1px;height:13.6px;background:#ADADAD"></div>
<svg style="position:absolute;left:550px;top:471px;" width="8" height="6" viewBox="0 0 8 6"><path d="M0 0H8L4 5.5Z" fill="#000"/></svg>
<div class="t" style="left:511.14px;top:470.00px;font-size:9.4px;line-height:9.4px;color:#1A1A1A;transform:scaleX(0.9230);transform-origin:0 0;">Insert</div>
<div style="position:absolute;left:570px;top:465px;width:63.6px;height:17.4px;background:#E1E1E1;border:1px solid #ADADAD;box-sizing:border-box"></div>
<div class="t" style="left:587.92px;top:470.00px;font-size:9.4px;line-height:9.4px;color:#1A1A1A;transform:scaleX(0.9603);transform-origin:0 0;">Cancel</div>
<svg style="position:absolute;left:637px;top:483px;" width="8" height="8" viewBox="0 0 8 8"><g fill="#B5B5B5"><rect x="5" y="1" width="1" height="1"/><rect x="3" y="3" width="1" height="1"/><rect x="5" y="3" width="1" height="1"/><rect x="1" y="5" width="1" height="1"/><rect x="3" y="5" width="1" height="1"/><rect x="5" y="5" width="1" height="1"/></g></svg>
<svg style="position:absolute;left:13px;top:3px;" width="13" height="13" viewBox="0 0 13 13"><path fill="#fff" fill-rule="evenodd" d="M1 1H11V12H1Z M2.6 2.6V7.6H9.4V2.6Z M3 9.2V12H9V9.2Z"/><rect x="5.2" y="9.8" width="1.6" height="2.2" fill="#fff"/></svg>
<svg style="position:absolute;left:44px;top:3px;" width="14" height="13" viewBox="0 0 14 13"><path d="M2.5 5.5 H8 A3.5 3.5 0 0 1 8 12.5 H6" fill="none" stroke="#E2866D" stroke-width="1.4"/><path d="M5 2.5 L1.8 5.5 L5 8.5" fill="none" stroke="#E2866D" stroke-width="1.4"/></svg>
<svg style="position:absolute;left:62px;top:8px;" width="5" height="3" viewBox="0 0 5 3"><path d="M0 0H5L2.5 3Z" fill="#E2866D"/></svg>
<svg style="position:absolute;left:79px;top:3px;" width="13" height="13" viewBox="0 0 13 13"><path d="M8.8 2.6 A4.4 4.4 0 1 1 4.2 2.6" fill="none" stroke="#E2866D" stroke-width="1.4"/><path d="M7.6 0.8 L11 1.6 L9.2 4.8Z" fill="#E2866D"/></svg>
<svg style="position:absolute;left:113px;top:3px;" width="15" height="14" viewBox="0 0 15 14"><rect x="1" y="1" width="12" height="1.2" fill="#fff"/><path d="M1.8 2 V7.5 H6" fill="none" stroke="#fff" stroke-width="1.1"/><circle cx="9.8" cy="6.5" r="3" fill="none" stroke="#fff" stroke-width="1.1"/><path d="M9 5 L11.2 6.5 L9 8Z" fill="#fff"/><path d="M5.5 11.5 H9" stroke="#F3C6B8" stroke-width="1" stroke-dasharray="1 .8"/></svg>
<svg style="position:absolute;left:150px;top:6px;" width="7" height="7" viewBox="0 0 7 7"><rect x="1.5" y="0.8" width="4" height="1.1" fill="#fff"/><path d="M1 3H6L3.5 6Z" fill="#fff"/></svg>
<svg style="position:absolute;left:675px;top:5px;" width="12" height="10" viewBox="0 0 12 10"><rect x="1.5" y="1.5" width="9" height="7" fill="none" stroke="#DE9580" stroke-width="1"/><path d="M6 3 L8 5.2 H4Z M5.5 5 H6.5 V7.5 H5.5Z" fill="#DE9580"/></svg>
<svg style="position:absolute;left:710px;top:10px;" width="9" height="2" viewBox="0 0 9 2"><rect x="0.5" y="0.5" width="8" height="1" fill="#DE9580"/></svg>
<svg style="position:absolute;left:744px;top:5px;" width="10" height="9" viewBox="0 0 10 9"><rect x="1.2" y="1.2" width="7.6" height="6.8" fill="none" stroke="#DE9580" stroke-width="1"/><rect x="1" y="1" width="8" height="1.8" fill="#DE9580"/></svg>
<svg style="position:absolute;left:778px;top:5px;" width="10" height="10" viewBox="0 0 10 10"><path d="M1.2 1.2 L8.6 8.6 M8.6 1.2 L1.2 8.6" stroke="#DE9580" stroke-width="1.1"/></svg>
<svg style="position:absolute;left:543px;top:25px;" width="10" height="13" viewBox="0 0 10 13"><path d="M2.3 7.2 A3.6 3.6 0 1 1 7.7 7.2 L6.5 8.8 V10 H3.5 V8.8 Z" fill="none" stroke="#ECAE9A" stroke-width="1"/><path d="M3.5 11.3 H6.5" stroke="#ECAE9A" stroke-width="1"/></svg>
<svg style="position:absolute;left:749px;top:25px;" width="14" height="14" viewBox="0 0 14 14"><circle cx="6" cy="4.2" r="3" fill="none" stroke="#F7DCD3" stroke-width="1.2"/><path d="M1 12.5 A5.5 5.5 0 0 1 8.5 7.5" fill="none" stroke="#F7DCD3" stroke-width="1.2"/><path d="M10.3 9 V13 M8.3 11 H12.3" stroke="#F7DCD3" stroke-width="1.1"/></svg>
<svg style="position:absolute;left:5px;top:44px;" width="25" height="22" viewBox="0 0 25 22"><rect x="2.5" y="4.5" width="21" height="16" fill="#fff" stroke="#8C8C8C" stroke-width="1"/><rect x="5.5" y="7.5" width="14.5" height="3" fill="#C9C9C9"/><path d="M5 14.5H20 M5 16.5H20" stroke="#ABABAB" stroke-width="0.9"/><g stroke="#F2C25B" stroke-width="1.1"><path d="M5 1 V9 M1 5 H9 M2.2 2.2 L7.8 7.8 M7.8 2.2 L2.2 7.8"/></g></svg>
<svg style="position:absolute;left:44px;top:46px;" width="23" height="21" viewBox="0 0 23 21"><rect x="1.5" y="1.5" width="20" height="18" fill="#fff" stroke="#6A6A6A" stroke-width="1"/><rect x="1.5" y="1.5" width="20" height="3.5" fill="#6A6A6A"/><path d="M1.5 9.5H21.5 M1.5 14H21.5 M8.3 5V19.5 M14.8 5V19.5" stroke="#9A9A9A" stroke-width="0.9"/></svg>
<svg style="position:absolute;left:83px;top:45px;" width="25" height="25" viewBox="0 0 25 25"><rect x="1.5" y="1.5" width="20.5" height="19.5" fill="#F6F6F6" stroke="#C6C6C6" stroke-width="1"/><circle cx="17" cy="6.5" r="2" fill="#D3D3D3"/><path d="M2 21 L9 11 L14 17 V21Z" fill="#D6D6D6"/><rect x="12.5" y="12.5" width="10.5" height="8" fill="#fff" stroke="#BDBDBD" stroke-width="1"/><path d="M16 23 H19.5" stroke="#BDBDBD" stroke-width="1"/></svg>
<svg style="position:absolute;left:113px;top:44px;" width="14" height="14" viewBox="0 0 14 14"><rect x="1.5" y="1.5" width="9" height="10" fill="#F4F4F4" stroke="#C4C4C4" stroke-width="1"/><circle cx="9.5" cy="9.5" r="3.5" fill="#fff" stroke="#BBBBBB" stroke-width="1"/><path d="M6 9.5H13 M9.5 6V13" stroke="#C4C4C4" stroke-width="0.7"/><path d="M2 11 L5 7 L7 9" fill="none" stroke="#C9C9C9" stroke-width="1"/></svg>
<svg style="position:absolute;left:113px;top:61px;" width="15" height="13" viewBox="0 0 15 13"><path d="M2.5 1V4 M5 1.5H7 M9 1.5H11" stroke="#C8C8C8" stroke-width="0.8" stroke-dasharray="1 1"/><rect x="1.5" y="6.5" width="8" height="5.5" rx="1" fill="#C2C2C2"/><rect x="4" y="5" width="3" height="1.5" fill="#C2C2C2"/><circle cx="5.5" cy="9.2" r="1.6" fill="#F1F1F1"/><path d="M12 7V12 M9.5 9.5H14.5" stroke="#BDBDBD" stroke-width="1.1"/></svg>
<svg style="position:absolute;left:113px;top:78px;" width="15" height="13" viewBox="0 0 15 13"><rect x="1.5" y="1.5" width="11" height="8.5" fill="#fff" stroke="#6E6E6E" stroke-width="1"/><rect x="2.5" y="2.5" width="9" height="3" fill="#3F6E9E"/><path d="M2.5 8.5 L6 6 L9 7.5 L11.5 5.5" fill="none" stroke="#53A38B" stroke-width="1.2"/><path d="M3 12.3H13.5 V6" fill="none" stroke="#6E6E6E" stroke-width="1"/></svg>
<svg style="position:absolute;left:203px;top:44px;" width="15" height="13" viewBox="0 0 15 13"><rect x="1.5" y="3.5" width="7" height="6" fill="none" stroke="#BFBFBF" stroke-width="1"/><circle cx="10" cy="4.5" r="3.5" fill="none" stroke="#BFBFBF" stroke-width="1"/><path d="M8 6 L12 9.5 L8 12.5 L4.5 9.5Z" fill="#F1F1F1" stroke="#BFBFBF" stroke-width="1"/></svg>
<svg style="position:absolute;left:203px;top:61px;" width="15" height="14" viewBox="0 0 15 14"><path d="M1.5 4.5 L3.5 1 H11 L13 4.5Z" fill="#4F9E86"/><rect x="5.5" y="4.5" width="8" height="8" fill="#fff" stroke="#6E6E6E" stroke-width="1"/><path d="M8.5 8H9.5 M8.5 10H9.5" stroke="#888" stroke-width="0.8"/></svg>
<svg style="position:absolute;left:204px;top:78px;" width="14" height="13" viewBox="0 0 14 13"><rect x="1" y="6.5" width="3.2" height="5.5" fill="#3F6E9E"/><rect x="5.5" y="2" width="3" height="10" fill="#E1C38A"/><rect x="9.5" y="4" width="3" height="8" fill="#666"/></svg>
<svg style="position:absolute;left:267px;top:50px;" width="12" height="13" viewBox="0 0 12 13"><path d="M1 3.5 H10.5 V11.5 H1Z" fill="#ABABAB"/><path d="M3 3.5 V2 A2.5 2.5 0 0 1 8 2 V3.5" fill="none" stroke="#ABABAB" stroke-width="1"/></svg>
<svg style="position:absolute;left:267px;top:74px;" width="12" height="12" viewBox="0 0 12 12"><path d="M4.5 1 H10.5 V10.5 H4.5Z" fill="#A6A6A6"/><path d="M4 3 L10.5 1" stroke="#C4C4C4" stroke-width="0.8"/><circle cx="3" cy="8.5" r="2.5" fill="#A6A6A6"/></svg>
<svg style="position:absolute;left:357px;top:45px;" width="26" height="25" viewBox="0 0 26 25"><g fill="none" stroke="#C2C2C2" stroke-width="0.9"><circle cx="10.5" cy="10" r="9"/><ellipse cx="10.5" cy="10" rx="4" ry="9"/><path d="M1.5 10H19.5 M3 5.5H18 M3 14.5H18 M10.5 1V19"/></g><g fill="none" stroke="#A8A8A8" stroke-width="1.8"><rect x="9.5" y="17.2" width="8" height="5" rx="2.5"/><rect x="15.5" y="17.2" width="8" height="5" rx="2.5"/></g></svg>
<svg style="position:absolute;left:394px;top:47px;" width="22" height="21" viewBox="0 0 22 21"><rect x="2" y="2" width="18" height="17" fill="none" stroke="#C8C8C8" stroke-width="0.9" stroke-dasharray="2 1"/><rect x="1" y="1" width="2" height="2" fill="#9E9E9E"/><rect x="19" y="1" width="2" height="2" fill="#9E9E9E"/><rect x="1" y="18" width="2" height="2" fill="#9E9E9E"/><rect x="19" y="18" width="2" height="2" fill="#9E9E9E"/><path d="M11 4.5 L12.9 8.6 L17.3 8.9 L13.9 11.8 L15 16.2 L11 13.8 L7 16.2 L8.1 11.8 L4.7 8.9 L9.1 8.6Z" fill="#9E9E9E"/></svg>
<svg style="position:absolute;left:435px;top:44px;" width="27" height="24" viewBox="0 0 27 24"><path d="M4.5 5.5 H23 A1.5 1.5 0 0 1 24.5 7 V16 A1.5 1.5 0 0 1 23 17.5 H12 L8.5 21.5 V17.5 H6 A1.5 1.5 0 0 1 4.5 16Z" fill="#fff" stroke="#7A7A7A" stroke-width="1"/><path d="M6.5 1 V10 M2 5.5 H11" stroke="#5A9E8A" stroke-width="2.6"/></svg>
<svg style="position:absolute;left:482px;top:46px;" width="23" height="21" viewBox="0 0 23 21"><rect x="1.5" y="1.5" width="20" height="18" fill="#F7F7F7" stroke="#C4C4C4" stroke-width="1"/><path d="M4 11 L6.5 4 L9 11 M5 8.7H8" fill="none" stroke="#B8B8B8" stroke-width="1.1"/><path d="M11 5H19.5 M11 7.5H19.5 M11 10H19.5 M4 13.5H19.5 M4 16H19.5" stroke="#C8C8C8" stroke-width="0.8"/></svg>
<svg style="position:absolute;left:520px;top:45px;" width="18" height="23" viewBox="0 0 18 23"><path d="M1.5 1.5 H11.5 L16 6 V21.5 H1.5Z" fill="#fff" stroke="#7A7A7A" stroke-width="1"/><path d="M11.5 1.5 V6 H16" fill="none" stroke="#7A7A7A" stroke-width="1"/><rect x="3" y="4" width="6" height="3.5" fill="#E1C07E"/><rect x="3" y="15.5" width="11.5" height="3.5" fill="#E1C07E"/></svg>
<svg style="position:absolute;left:555px;top:46px;" width="19" height="21" viewBox="0 0 19 21"><path d="M2 20 L13 1.5 H15.5 L17 20 M7 13.5 H15.8" fill="none" stroke="#B4B4B4" stroke-width="2.6"/></svg>
<svg style="position:absolute;left:585px;top:44px;" width="14" height="14" viewBox="0 0 14 14"><rect x="1" y="1.5" width="10" height="8" fill="#fff" stroke="#6E6E6E" stroke-width="1"/><rect x="1" y="1" width="10" height="2" fill="#6E6E6E"/><rect x="2.5" y="4.5" width="3" height="2.5" fill="#E1B871"/><circle cx="9.5" cy="9.5" r="3.3" fill="#fff" stroke="#3F6E9E" stroke-width="1"/><path d="M9.5 7.5V9.7H11" fill="none" stroke="#3F6E9E" stroke-width="0.8"/></svg>
<svg style="position:absolute;left:585px;top:62px;" width="14" height="11" viewBox="0 0 14 11"><rect x="1.5" y="1" width="11" height="8.5" fill="#fff" stroke="#7A7A7A" stroke-width="1"/><rect x="6" y="5.5" width="2" height="2" fill="#3F6E9E"/></svg>
<svg style="position:absolute;left:585px;top:79px;" width="14" height="12" viewBox="0 0 14 12"><rect x="1.5" y="1.5" width="11" height="9" fill="#fff" stroke="#3F6E9E" stroke-width="1"/><rect x="1" y="1" width="12" height="2" fill="#3F6E9E"/></svg>
<svg style="position:absolute;left:611px;top:43px;" width="24" height="24" viewBox="0 0 24 24"><rect x="1" y="1" width="21.5" height="21.5" fill="#FBFBFB" stroke="#D0D0D0" stroke-width="1"/></svg>
<svg style="position:absolute;left:612px;top:44px;" width="22" height="22" viewBox="0 0 22 22"><text x="11.8" y="14.8" text-anchor="middle" font-family="Liberation Serif" font-size="12.5" font-weight="bold" fill="#2E5A8A">&#937;</text></svg>
<svg style="position:absolute;left:651px;top:47px;" width="20" height="19" viewBox="0 0 20 19"><rect x="1" y="1" width="18" height="17" fill="#6A6A6A"/><rect x="2" y="4" width="16" height="11" fill="#fff"/><g fill="#fff"><rect x="2.5" y="1.8" width="1.4" height="1.4"/><rect x="5" y="1.8" width="1.4" height="1.4"/><rect x="7.5" y="1.8" width="1.4" height="1.4"/><rect x="10" y="1.8" width="1.4" height="1.4"/><rect x="12.5" y="1.8" width="1.4" height="1.4"/><rect x="15" y="1.8" width="1.4" height="1.4"/><rect x="2.5" y="15.8" width="1.4" height="1.4"/><rect x="5" y="15.8" width="1.4" height="1.4"/><rect x="7.5" y="15.8" width="1.4" height="1.4"/><rect x="10" y="15.8" width="1.4" height="1.4"/><rect x="12.5" y="15.8" width="1.4" height="1.4"/><rect x="15" y="15.8" width="1.4" height="1.4"/></g></svg>
<svg style="position:absolute;left:681px;top:46px;" width="23" height="21" viewBox="0 0 23 21"><path d="M1 7 H5 L12 1 V20 L5 14 H1Z" fill="#6E6E6E"/><path d="M14.5 6 A5 5 0 0 1 14.5 15 M16.5 3.5 A8 8 0 0 1 16.5 17.5" fill="none" stroke="#4D7AA6" stroke-width="1.2"/></svg>
<svg style="position:absolute;left:717px;top:45px;" width="24" height="23" viewBox="0 0 24 23"><rect x="3.5" y="1.5" width="17" height="14.5" fill="#fff" stroke="#9A9A9A" stroke-width="0.9" stroke-dasharray="1.5 1.2"/><rect x="1" y="15.5" width="10" height="6" fill="#8C8C8C"/><rect x="1" y="17" width="6" height="2" fill="#3F6E9E"/><path d="M12 16.5 L14 15.5 V21 L12 20Z" fill="#666"/><path d="M20 16.5 V22 M17.3 19.3 H22.7" stroke="#3F6E9E" stroke-width="1.2"/></svg>
<svg style="position:absolute;left:26.0px;top:86.5px;" width="5" height="3" viewBox="0 0 5 3"><path d="M0 0H5L2.5 3Z" fill="#555"/></svg>
<svg style="position:absolute;left:53.0px;top:87.0px;" width="5" height="3" viewBox="0 0 5 3"><path d="M0 0H5L2.5 3Z" fill="#555"/></svg>
<svg style="position:absolute;left:173.5px;top:68.5px;" width="5" height="3" viewBox="0 0 5 3"><path d="M0 0H5L2.5 3Z" fill="#A8A8A8"/></svg>
<svg style="position:absolute;left:188.5px;top:85.5px;" width="5" height="3" viewBox="0 0 5 3"><path d="M0 0H5L2.5 3Z" fill="#555"/></svg>
<svg style="position:absolute;left:248.0px;top:52.0px;" width="5" height="3" viewBox="0 0 5 3"><path d="M0 0H5L2.5 3Z" fill="#A8A8A8"/></svg>
<svg style="position:absolute;left:332.0px;top:80.0px;" width="5" height="3" viewBox="0 0 5 3"><path d="M0 0H5L2.5 3Z" fill="#A8A8A8"/></svg>
<svg style="position:absolute;left:499.0px;top:88.0px;" width="5" height="3" viewBox="0 0 5 3"><path d="M0 0H5L2.5 3Z" fill="#A8A8A8"/></svg>
<svg style="position:absolute;left:563.0px;top:87.0px;" width="5" height="3" viewBox="0 0 5 3"><path d="M0 0H5L2.5 3Z" fill="#A8A8A8"/></svg>
<svg style="position:absolute;left:621.0px;top:85.0px;" width="5" height="3" viewBox="0 0 5 3"><path d="M0 0H5L2.5 3Z" fill="#555"/></svg>
<svg style="position:absolute;left:658.5px;top:87.0px;" width="5" height="3" viewBox="0 0 5 3"><path d="M0 0H5L2.5 3Z" fill="#555"/></svg>
<svg style="position:absolute;left:689.5px;top:87.0px;" width="5" height="3" viewBox="0 0 5 3"><path d="M0 0H5L2.5 3Z" fill="#555"/></svg>
<svg style="position:absolute;left:785px;top:99px;" width="9" height="6" viewBox="0 0 9 6"><path d="M1 5 L4.5 1.5 L8 5" fill="none" stroke="#555" stroke-width="1.3"/></svg>
</body></html>
